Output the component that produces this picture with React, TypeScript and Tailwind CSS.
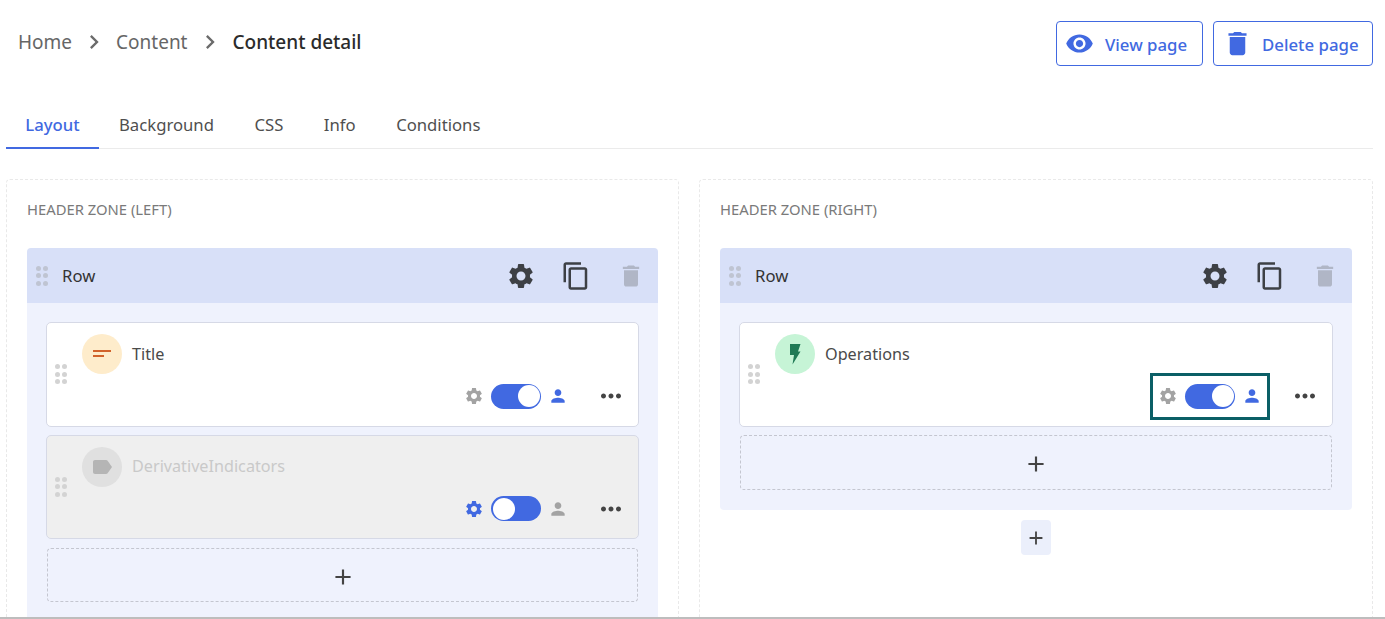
import { MdAdd, MdChevronRight, MdContentCopy, MdDelete, MdLabel, MdMoreHoriz, MdPerson, MdSettings, MdVisibility } from "react-icons/md";

function Dots({ color }: { color: string }) {
  return (
    <div className={`grid grid-cols-2 gap-x-[2px] gap-y-[2.5px] ${color}`}>
      {[0, 1, 2, 3, 4, 5].map((i) => (
        <span key={i} className="h-[5px] w-[5px] rounded-full bg-current" />
      ))}
    </div>
  );
}

function Toggle({ on }: { on: boolean }) {
  return (
    <div className={`flex h-[25px] w-[50px] items-center rounded-full bg-[#4169e1] px-[1.5px] ${on ? "justify-end" : "justify-start"}`}>
      <span className="h-[22px] w-[22px] rounded-full bg-white" />
    </div>
  );
}

function TitleGlyph() {
  return (
    <svg width="18" height="8" viewBox="0 0 18 8">
      <rect x="0" y="0" width="18" height="2" fill="#d2622a" />
      <rect x="0" y="5" width="11" height="2" fill="#d2622a" />
    </svg>
  );
}

function BoltGlyph() {
  return (
    <svg width="12" height="22" viewBox="0 0 12 22">
      <path d="M1 1h10.5L9 8.5h2.5L3.5 21.5 5 12H1z" fill="#1f7a55" />
    </svg>
  );
}

function Card({
  name,
  disabled,
  circle,
  icon,
  highlight,
}: {
  name: string;
  disabled?: boolean;
  circle: string;
  icon: React.ReactNode;
  highlight?: boolean;
}) {
  return (
    <div className={`flex h-[104.5px] rounded-[5px] border border-[#d6d9e6] pl-[8px] pr-[5px] ${disabled ? "bg-[#efefef]" : "bg-white"}`}>
      <div className="mt-[41px] mr-[15px]">
        <Dots color="text-[#d3d3d3]" />
      </div>
      <div className="flex min-w-0 flex-1 flex-col pt-[11px]">
        <div className="flex items-center gap-[10px]">
          <div className={`flex h-10 w-10 items-center justify-center rounded-full ${circle}`}>{icon}</div>
          <span className={`-mt-[1px] text-[16.2px] leading-[24px] ${disabled ? "text-[#c9c9c9]" : "text-[#4a4a4a]"}`}>{name}</span>
        </div>
        <div className="mt-[7px] flex items-center justify-end">
          <div className={`flex items-center ${highlight ? "relative" : ""}`}>
            {highlight && <div className="absolute -left-[8px] -top-[11px] h-[47px] w-[120px] border-[3px] border-[#0b5f66]" />}
            <MdSettings size={20} className={disabled ? "text-[#4169e1]" : "text-[#a3a3a3]"} />
            <div className="ml-[7px]">
              <Toggle on={!disabled} />
            </div>
            <MdPerson size={20} className={`ml-[7px] ${disabled ? "text-[#a3a3a3]" : "text-[#4169e1]"}`} />
          </div>
          <MdMoreHoriz size={30} className="ml-[28px] mr-[7px] text-[#444]" />
        </div>
      </div>
    </div>
  );
}

function AddBox({ height, offset }: { height: string; offset: string }) {
  return (
    <div className={`mx-[1px] flex items-center justify-center rounded-[4px] border border-dashed border-[#c4c6d0] text-[#444] ${height} ${offset}`}>
      <MdAdd size={26} />
    </div>
  );
}

function Row({ children }: { children: React.ReactNode }) {
  return (
    <div className="overflow-hidden rounded-[4px]">
      <div className="flex h-[55px] items-center bg-[#d8e0f8] pl-[9px] pr-[13px]">
        <Dots color="text-[#bfc4d2]" />
        <span className="ml-[14px] flex-1 pt-[1px] text-[16.7px] text-[#333]">Row</span>
        <MdSettings size={30} className="text-[#3d4045]" />
        <MdContentCopy size={30} className="ml-[25px] text-[#3d4045]" />
        <MdDelete size={28} className="ml-[26px] text-[#b0b6c6]" />
      </div>
      <div className="flex flex-col gap-[8px] bg-[#eff2fd] px-[19px] pt-[19px] pb-[20px]">{children}</div>
    </div>
  );
}

function Zone({ label, width, children }: { label: string; width: string; children: React.ReactNode }) {
  return (
    <div className={`h-[460px] rounded-[4px] border border-dashed border-[#e9e9e9] px-[20px] pt-[18.5px] ${width}`}>
      <div className="mb-[29.5px] text-[14.8px] leading-[20px] text-[#7a7a7a]">{label}</div>
      {children}
    </div>
  );
}

export default function App() {
  return (
    <div className="relative h-[619px] w-[1385px] overflow-hidden bg-white font-['Noto_Sans',sans-serif]">
      <div className="flex h-[100px] items-start justify-between pl-[18px] pr-[12px]">
        <div className="mt-[27px] flex items-center text-[19px] leading-[30px] text-[#666]">
          <span>Home</span>
          <MdChevronRight size={28} className="mx-[8px] text-[#6b6b6b]" />
          <span>Content</span>
          <MdChevronRight size={28} className="mx-[8.5px] text-[#6b6b6b]" />
          <span className="font-medium text-[#2b2b2b]">Content detail</span>
        </div>
        <div className="mt-[21px] flex gap-[10px]">
          <button className="flex h-[45px] w-[147px] items-center rounded-[4px] border border-[#4169e1] pl-[8px] text-[16.8px] font-medium text-[#4169e1]">
            <MdVisibility size={29} />
            <span className="ml-[11px] mt-[2px]">View page</span>
          </button>
          <button className="flex h-[45px] w-[160px] items-center rounded-[4px] border border-[#4169e1] pl-[8px] text-[16.8px] font-medium text-[#4169e1]">
            <MdDelete size={31} />
            <span className="ml-[9px] mt-[2px]">Delete page</span>
          </button>
        </div>
      </div>

      <div className="mx-[6px] mr-[12px] flex h-[49px] border-b border-[#ebebeb] text-[16.7px]">
        <div className="-mb-[1px] flex w-[93px] items-center justify-center border-b-2 border-[#4169e1] pt-[2px] font-medium text-[#4169e1]">Layout</div>
        <div className="ml-[20px] flex items-center gap-[40.5px] pt-[1px] text-[#4f4f4f]">
          <span>Background</span>
          <span>CSS</span>
          <span>Info</span>
          <span>Conditions</span>
        </div>
      </div>

      <div className="mx-[6px] mr-[12px] mt-[30px] flex gap-[20px]">
        <Zone label="HEADER ZONE (LEFT)" width="w-[673px]">
          <Row>
            <Card name="Title" circle="bg-[#feeccb]" icon={<TitleGlyph />} />
            <Card name="DerivativeIndicators" disabled circle="bg-[#e0e0e0]" icon={<MdLabel size={24} className="text-[#b5b5b5]" />} />
            <AddBox height="h-[54px]" offset="mt-[1px] pt-[4px]" />
          </Row>
        </Zone>
        <Zone label="HEADER ZONE (RIGHT)" width="flex-1">
          <Row>
            <Card name="Operations" circle="bg-[#c6f4d6]" icon={<BoltGlyph />} highlight />
            <AddBox height="h-[55px]" offset="mt-[0.5px] pt-[3px]" />
          </Row>
          <div className="mt-[10px] flex justify-center">
            <div className="flex h-[35px] w-[30px] items-center justify-center rounded-[4px] bg-[#ebeffb] text-[#444]">
              <MdAdd size={22} />
            </div>
          </div>
        </Zone>
      </div>

      <div className="absolute bottom-0 left-0 h-[2px] w-full bg-[#bdbdbd]" />
    </div>
  );
}
